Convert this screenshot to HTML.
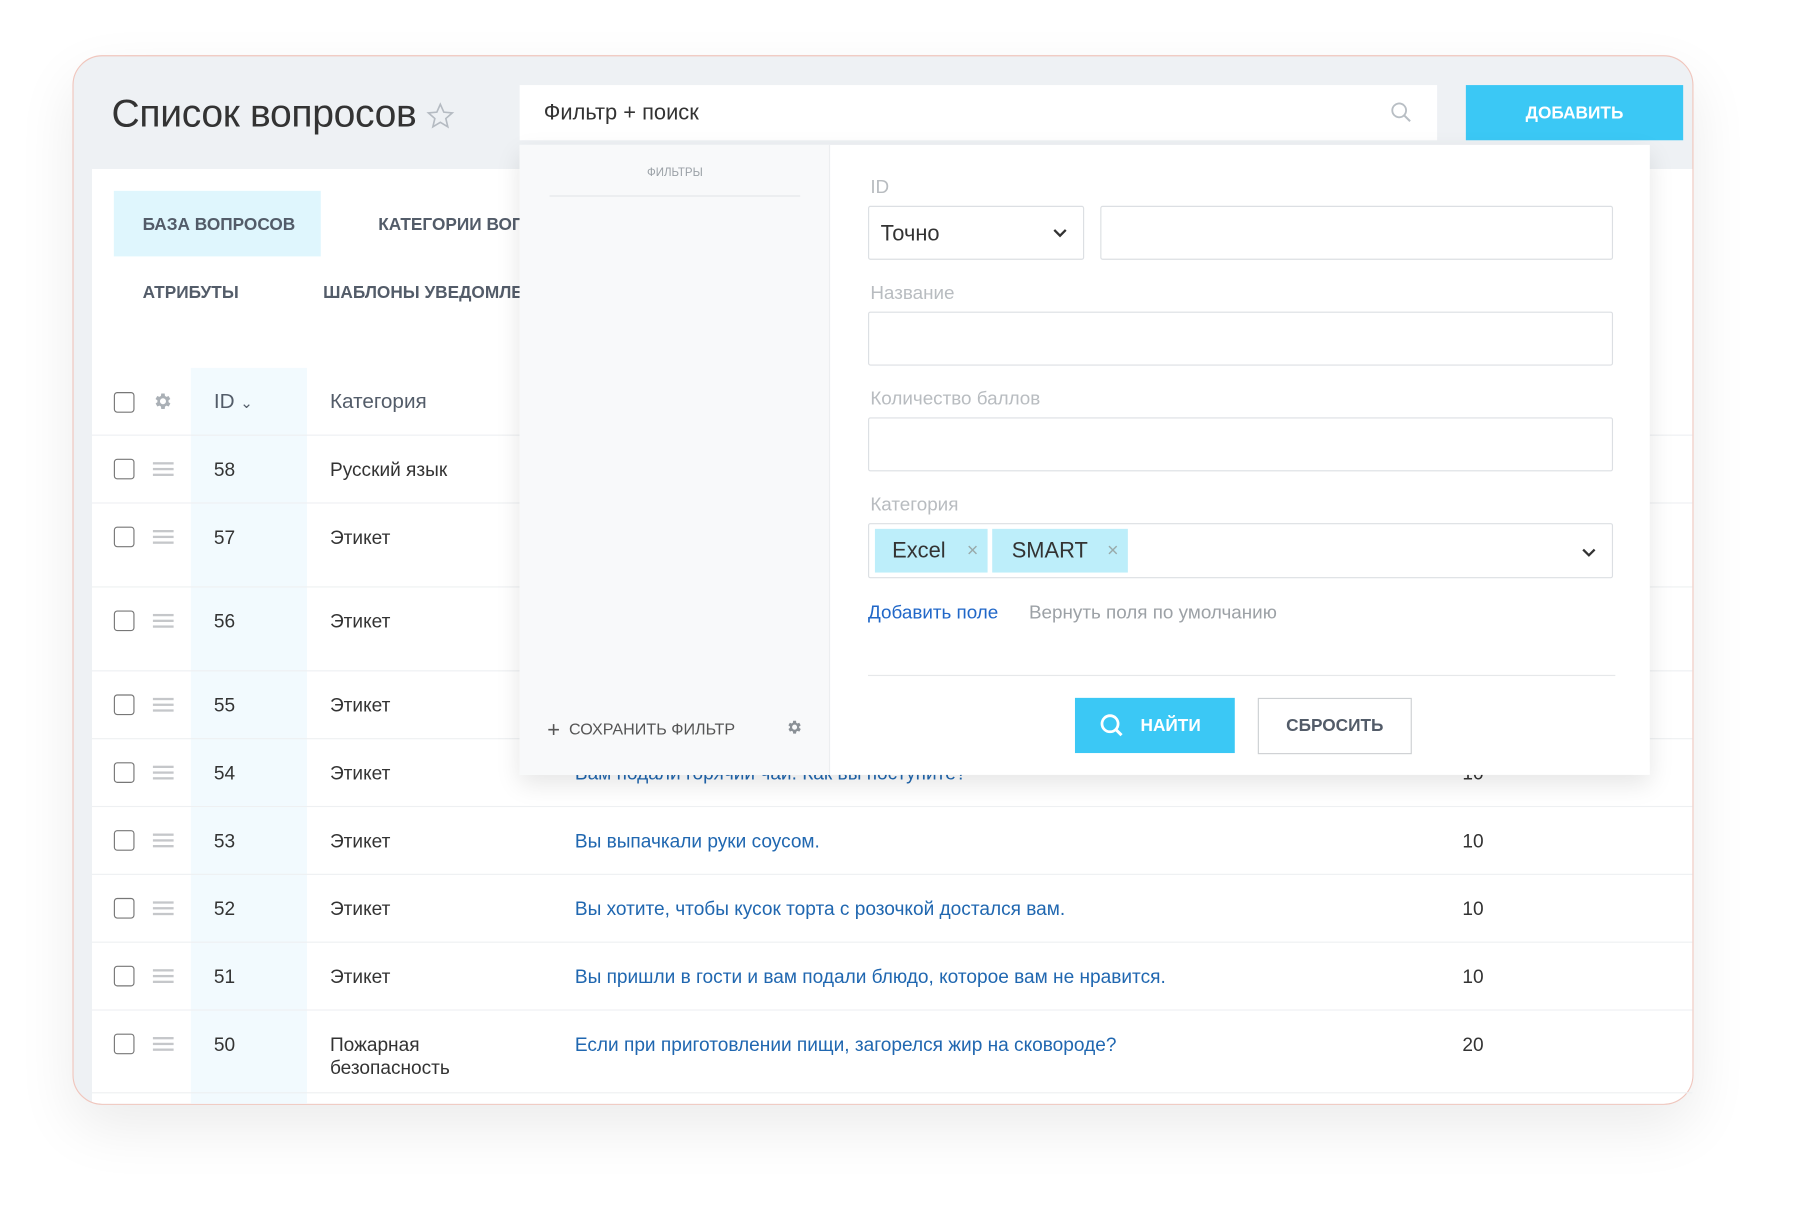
<!DOCTYPE html>
<html><head><meta charset="utf-8"><style>
*{box-sizing:border-box;margin:0;padding:0}
html,body{width:1802px;height:1230px;overflow:hidden;background:#fff;font-family:"Liberation Sans",sans-serif}
#w{position:absolute;left:0;top:0;width:1570px;height:1070px;transform:scale(1.1497);transform-origin:0 0}
.a{position:absolute}
.card{left:63px;top:48px;width:1410px;height:913px;border:1px solid #f0c6bd;border-radius:26px;background:#eef1f4;overflow:hidden;box-shadow:0 20px 50px rgba(0,0,0,.08)}
.cb{width:18px;height:18px;border:1.5px solid #777;border-radius:3px;background:#fff}
.hb{width:18px;height:12px;border-top:2px solid #c5c7ca;border-bottom:2px solid #c5c7ca}
.hb:after{content:"";position:absolute;left:0;right:0;top:3px;border-top:2px solid #c5c7ca}
.t{font-size:16.6px;color:#333}
.lk{font-size:16.6px;color:#2067b0}
.tab{font-size:15px;font-weight:bold;color:#535c69}
.lab{font-size:16.4px;color:#b8bcc0}
.inp{border:1px solid #dcdfe3;border-radius:2px;background:#fff}
.line{height:1px;background:#eef0f2}
</style></head><body><div id="w">
<div class="a card">
 <div class="a" style="left:16px;top:98px;width:1400px;height:820px;background:#fff"></div>
 <div class="a" style="left:102px;top:271px;width:101px;height:650px;background:#f2fafe"></div>
</div>
<div class="a" style="left:97px;top:80px;font-size:34px;color:#333;letter-spacing:-0.3px">Список вопросов</div>
<svg class="a" style="left:370px;top:88px" width="26" height="26" viewBox="0 0 24 24"><path d="M12 2.5l2.8 6.3 6.8.6-5.2 4.5 1.6 6.7L12 17l-6 3.6 1.6-6.7L2.4 9.4l6.8-.6z" fill="none" stroke="#b5bbc2" stroke-width="1.3"/></svg>
<div class="a tab" style="left:99px;top:166px;width:180px;height:57px;background:#dff6fd"></div>
<div class="a tab" style="left:124px;top:187px">БАЗА ВОПРОСОВ</div>
<div class="a tab" style="left:329px;top:187px">КАТЕГОРИИ ВОПРОСОВ</div>
<div class="a tab" style="left:124px;top:246px">АТРИБУТЫ</div>
<div class="a tab" style="left:281px;top:246px">ШАБЛОНЫ УВЕДОМЛЕНИЙ</div>
<div class="a cb" style="left:99px;top:341px"></div>
<svg class="a" style="left:132px;top:340px" width="18" height="18" viewBox="0 0 24 24"><path fill="#aab0b6" d="M19.4 13a7.5 7.5 0 000-2l2.1-1.6-2-3.5-2.5 1a7 7 0 00-1.7-1L15 3h-4l-.4 2.9a7 7 0 00-1.7 1l-2.5-1-2 3.5L6.6 11a7.5 7.5 0 000 2l-2.1 1.6 2 3.5 2.5-1c.5.4 1.1.8 1.7 1L11 21h4l.4-2.9c.6-.2 1.2-.6 1.7-1l2.5 1 2-3.5zM13 15.5a3.5 3.5 0 110-7 3.5 3.5 0 010 7z"/></svg>
<div class="a" style="left:186px;top:339px;font-size:18px;color:#535c69">ID <span style="font-size:13px">&#8964;</span></div>
<div class="a" style="left:287px;top:339px;font-size:18px;color:#535c69">Категория</div>
<div class="a line" style="left:80px;top:378px;width:1392px"></div>
<div id="rows"></div>
<div class="a" style="left:452px;top:74px;width:798px;height:48px;background:#fff"></div>
<div class="a" style="left:473px;top:88px;font-size:19px;color:#333">Фильтр + поиск</div>
<svg class="a" style="left:1209px;top:88px" width="20" height="20" viewBox="0 0 20 20"><circle cx="8" cy="8" r="6" fill="none" stroke="#b8bec4" stroke-width="1.6"/><path d="M12.5 12.5l5 5" stroke="#b8bec4" stroke-width="1.8"/></svg>
<div class="a" style="left:1275px;top:74px;width:189px;height:48px;background:#3bc8f5;color:#fff;font-weight:bold;font-size:15px;text-align:center;line-height:50px">ДОБАВИТЬ</div>
<div class="a" style="left:452px;top:126px;width:983px;height:548px;background:#fff;box-shadow:0 8px 20px rgba(0,0,0,.10)"></div>
<div class="a" style="left:452px;top:126px;width:270px;height:548px;background:#f8f9fa;border-right:1px solid #eceef0"></div>
<div class="a" style="left:452px;top:145px;width:270px;text-align:center;font-size:10px;color:#9aa0a6">ФИЛЬТРЫ</div>
<div class="a" style="left:478px;top:170px;width:218px;height:1px;background:#e3e6e9"></div>
<div class="a" style="left:476px;top:625px;font-size:14px;color:#555"><span style="font-size:19px;vertical-align:-2px">+</span>&nbsp; СОХРАНИТЬ ФИЛЬТР</div>
<svg class="a" style="left:683px;top:625px" width="15" height="15" viewBox="0 0 24 24"><path fill="#8a9096" d="M19.4 13a7.5 7.5 0 000-2l2.1-1.6-2-3.5-2.5 1a7 7 0 00-1.7-1L15 3h-4l-.4 2.9a7 7 0 00-1.7 1l-2.5-1-2 3.5L6.6 11a7.5 7.5 0 000 2l-2.1 1.6 2 3.5 2.5-1c.5.4 1.1.8 1.7 1L11 21h4l.4-2.9c.6-.2 1.2-.6 1.7-1l2.5 1 2-3.5zM13 15.5a3.5 3.5 0 110-7 3.5 3.5 0 010 7z"/></svg>
<div class="a lab" style="left:757px;top:154px">ID</div>
<div class="a inp" style="left:755px;top:179px;width:188px;height:47px"></div>
<div class="a" style="left:766px;top:193px;font-size:19px;color:#333">Точно</div>
<svg class="a" style="left:915px;top:198px" width="14" height="10" viewBox="0 0 14 10"><path d="M2 2l5 5 5-5" fill="none" stroke="#333" stroke-width="2"/></svg>
<div class="a inp" style="left:957px;top:179px;width:446px;height:47px"></div>
<div class="a lab" style="left:757px;top:246px">Название</div>
<div class="a inp" style="left:755px;top:271px;width:648px;height:47px"></div>
<div class="a lab" style="left:757px;top:338px">Количество баллов</div>
<div class="a inp" style="left:755px;top:363px;width:648px;height:47px"></div>
<div class="a lab" style="left:757px;top:430px">Категория</div>
<div class="a inp" style="left:755px;top:455px;width:648px;height:48px"></div>
<div class="a" style="left:761px;top:460px;width:98px;height:38px;background:#bdeefa"></div>
<div class="a" style="left:776px;top:469px;font-size:19px;color:#333">Excel</div>
<div class="a" style="left:841px;top:469px;font-size:17px;color:#9aa">×</div>
<div class="a" style="left:863px;top:460px;width:118px;height:38px;background:#bdeefa"></div>
<div class="a" style="left:880px;top:469px;font-size:19px;color:#333">SMART</div>
<div class="a" style="left:963px;top:469px;font-size:17px;color:#9aa">×</div>
<svg class="a" style="left:1375px;top:476px" width="14" height="10" viewBox="0 0 14 10"><path d="M2 2l5 5 5-5" fill="none" stroke="#333" stroke-width="2"/></svg>
<div class="a" style="left:755px;top:524px;font-size:16.4px;color:#2067c8">Добавить поле</div>
<div class="a" style="left:895px;top:524px;font-size:16.4px;color:#9ca1a6">Вернуть поля по умолчанию</div>
<div class="a" style="left:755px;top:587px;width:650px;height:1px;background:#e6e8ea"></div>
<div class="a" style="left:935px;top:607px;width:139px;height:48px;background:#3bc8f5"></div>
<svg class="a" style="left:956px;top:620px" width="22" height="22" viewBox="0 0 22 22"><circle cx="9.5" cy="9.5" r="7" fill="none" stroke="#fff" stroke-width="2.4"/><path d="M14.5 14.5l5 5" stroke="#fff" stroke-width="2.6"/></svg>
<div class="a" style="left:992px;top:623px;font-size:15px;font-weight:bold;color:#fff">НАЙТИ</div>
<div class="a" style="left:1094px;top:607px;width:134px;height:49px;border:1.5px solid #cdd0d3;background:#fff;text-align:center;line-height:48px;font-size:15px;font-weight:bold;color:#535c69">СБРОСИТЬ</div>
</div>
<script>
var r=[[408,437,"58","Русский язык","",""],[467,510,"57","Этикет","",""],[540,583,"56","Этикет","",""],[613,642,"55","Этикет","",""],[672,701,"54","Этикет","Вам подали горячий чай. Как вы поступите?","10"],[731,760,"53","Этикет","Вы выпачкали руки соусом.","10"],[790,819,"52","Этикет","Вы хотите, чтобы кусок торта с розочкой достался вам.","10"],[849,878,"51","Этикет","Вы пришли в гости и вам подали блюдо, которое вам не нравится.","10"],[908,950,"50","Пожарная<br>безопасность","Если при приготовлении пищи, загорелся жир на сковороде?","20"]];
var h="";r.forEach(function(x){var y=x[0];
h+='<div class="a cb" style="left:99px;top:'+(y-9)+'px"></div><div class="a hb" style="left:133px;top:'+(y-6)+'px"></div>';
h+='<div class="a t" style="left:186px;top:'+(y-9)+'px">'+x[2]+'</div><div class="a t" style="left:287px;top:'+(y-9)+'px;line-height:20px">'+x[3]+'</div>';
h+='<div class="a lk" style="left:500px;top:'+(y-9)+'px">'+x[4]+'</div><div class="a t" style="left:1272px;top:'+(y-9)+'px">'+x[5]+'</div>';
h+='<div class="a line" style="left:80px;top:'+x[1]+'px;width:1392px"></div>';});
document.getElementById('rows').outerHTML=h;
</script>
</body></html>
